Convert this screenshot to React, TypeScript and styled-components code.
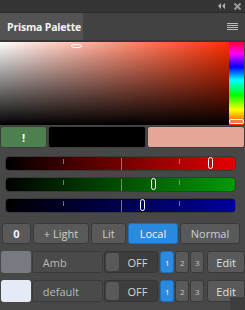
import { FC } from "react";
import styled, { createGlobalStyle } from "styled-components";

const Global = createGlobalStyle`
  html, body {
    margin: 0;
    padding: 0;
    background: #474747;
  }
  body {
    font-family: "Open Sans", "Noto Sans", sans-serif;
  }
`;

const Panel = styled.div`
  width: 245px;
  height: 310px;
  background: #474747;
  position: relative;
  overflow: hidden;
`;

const TopBar = styled.div`
  height: 12px;
  background: #353535;
  border-bottom: 1px solid #2b2b2b;
  display: flex;
  align-items: center;
  justify-content: flex-end;
  gap: 9px;
  padding-right: 4px;
`;

const TabBar = styled.div`
  height: 27px;
  background: #424242;
  display: flex;
  align-items: stretch;
  justify-content: space-between;
  border-bottom: 2px solid #363636;
`;

const Tab = styled.div`
  width: 83px;
  background: #535353;
  color: #f2f2f2;
  font-size: 10.5px;
  font-weight: 700;
  white-space: nowrap;
  letter-spacing: -0.2px;
  display: flex;
  align-items: center;
  padding-left: 7px;
  box-sizing: border-box;
`;

const MenuIcon = styled.div`
  display: flex;
  align-items: center;
  padding-right: 7px;
`;

const PickerRow = styled.div`
  display: flex;
  height: 83px;
`;

const SVArea = styled.div`
  position: relative;
  width: 229px;
  background: linear-gradient(to top, #000 0%, rgba(0, 0, 0, 0) 100%),
    linear-gradient(to right, #ffffff 0%, #ff2d00 100%);
`;

const SVMarker = styled.div`
  position: absolute;
  left: 71px;
  top: 2px;
  width: 9px;
  height: 2px;
  border: 1.5px solid #fff;
  border-radius: 50%;
`;

const HueBar = styled.div`
  position: relative;
  width: 15px;
  background: linear-gradient(
    to bottom,
    #ff0030 0%,
    #ff00ff 14%,
    #0000ff 30%,
    #00ffff 46%,
    #00ff00 64%,
    #ffff00 82%,
    #ff2a00 100%
  );
`;

const HueMarker = styled.div`
  position: absolute;
  left: 0;
  right: 0;
  bottom: 1px;
  height: 3px;
  background: #f07a5a;
  border: 1px solid #fff;
  border-radius: 2px;
`;

const SwatchRow = styled.div`
  display: flex;
  height: 22px;
  gap: 1px;
  margin-top: 1px;
`;

const Swatch = styled.div<{ $bg: string; $w: number }>`
  width: ${(p) => p.$w}px;
  background: ${(p) => p.$bg};
  border-radius: 3px;
  border: 1px solid #3c3c3c;
  box-sizing: border-box;
  display: flex;
  align-items: center;
  justify-content: center;
  color: #fff;
  font-size: 11px;
  font-weight: 700;
`;

const Sliders = styled.div`
  display: flex;
  flex-direction: column;
  gap: 6px;
  padding: 8px 9px 0 5px;
`;

const Slider = styled.div<{ $color: string }>`
  position: relative;
  height: 15px;
  border-radius: 4px;
  border: 1px solid #383838;
  box-sizing: border-box;
  background: linear-gradient(to right, #000 0%, ${(p) => p.$color} 100%);
`;

const Tick = styled.div<{ $full?: boolean }>`
  position: absolute;
  top: ${(p) => (p.$full ? 1 : 2)}px;
  width: 1px;
  height: ${(p) => (p.$full ? 12 : 5)}px;
  background: rgba(200, 200, 200, 0.55);
`;

const Thumb = styled.div`
  position: absolute;
  top: 0px;
  width: 3px;
  height: 10px;
  border: 1.5px solid #fff;
  border-radius: 3px;
`;

const ButtonRow = styled.div`
  display: flex;
  gap: 2px;
  padding: 10px 0 0 2px;
`;

const Btn = styled.div<{ $w: number; $active?: boolean; $bright?: boolean }>`
  width: ${(p) => p.$w}px;
  height: 21px;
  box-sizing: border-box;
  border-radius: 3px;
  border: 1px solid ${(p) => (p.$active ? "#1f6fb8" : "#3a3a3a")};
  background: ${(p) => (p.$active ? "#2a8ae0" : "#595959")};
  color: ${(p) => (p.$active || p.$bright ? "#f4f4f4" : "#cfcfcf")};
  font-size: 11px;
  font-weight: ${(p) => (p.$bright ? 700 : 400)};
  display: flex;
  align-items: center;
  justify-content: center;
`;

const Rows = styled.div`
  display: flex;
  flex-direction: column;
  gap: 7px;
  padding: 7px 0 0 1px;
`;

const LightRow = styled.div`
  display: flex;
  align-items: stretch;
  height: 22px;
`;

const ColorBox = styled.div<{ $bg: string }>`
  width: 30px;
  background: ${(p) => p.$bg};
  border-radius: 3px;
  margin-right: 1px;
`;

const NameField = styled.div`
  width: 71px;
  box-sizing: border-box;
  background: #4a4a4a;
  border: 1px solid #3a3a3a;
  border-radius: 3px;
  color: #b9b9b9;
  font-size: 11px;
  display: flex;
  align-items: center;
  padding-left: 10px;
  margin-right: 1px;
`;

const Toggle = styled.div`
  width: 55px;
  box-sizing: border-box;
  background: #3d3d3d;
  border: 1px solid #353535;
  border-radius: 3px;
  display: flex;
  align-items: stretch;
  padding: 1px;
  margin-right: 2px;
`;

const Knob = styled.div`
  width: 13px;
  background: #595959;
  border-radius: 3px;
`;

const ToggleText = styled.div`
  flex: 1;
  display: flex;
  align-items: center;
  justify-content: center;
  color: #d6d6d6;
  font-size: 11px;
`;

const NumBtn = styled.div<{ $active?: boolean }>`
  width: 14px;
  box-sizing: border-box;
  margin-right: 1px;
  border-radius: 3px;
  border: 1px solid ${(p) => (p.$active ? "#1f6fb8" : "#3a3a3a")};
  background: ${(p) => (p.$active ? "#2a8ae0" : "#595959")};
  color: ${(p) => (p.$active ? "#fff" : "#c6c6c6")};
  font-size: 8px;
  display: flex;
  align-items: center;
  justify-content: center;
`;

const EditBtn = styled.div`
  width: 38px;
  margin-left: 2px;
  box-sizing: border-box;
  border-radius: 3px;
  border: 1px solid #3a3a3a;
  background: #595959;
  color: #e0e0e0;
  font-size: 11px;
  display: flex;
  align-items: center;
  justify-content: center;
`;

const Grip = styled.div`
  position: absolute;
  right: 0;
  bottom: 0;
  width: 15px;
  height: 13px;
  background: #3e3e3e;
`;

const sliders = [
  { color: "#e60000", thumb: 202 },
  { color: "#009c00", thumb: 145 },
  { color: "#00009c", thumb: 134 },
];

const lights = [
  { name: "Amb", color: "#777a80" },
  { name: "default", color: "#e6e9f6" },
];

const App: FC = () => {
  return (
    <Panel>
      <Global />
      <TopBar>
        <svg width="8" height="6" viewBox="0 0 8 6">
          <path d="M4 0 L1 3 L4 6 Z M8 0 L5 3 L8 6 Z" fill="#b0b0b0" />
        </svg>
        <svg width="7" height="7" viewBox="0 0 7 7">
          <path d="M0.5 0.5 L6.5 6.5 M6.5 0.5 L0.5 6.5" stroke="#9a9a9a" strokeWidth="2" />
        </svg>
      </TopBar>
      <TabBar>
        <Tab>Prisma Palette</Tab>
        <MenuIcon>
          <svg width="11" height="8" viewBox="0 0 11 8">
            <path d="M0 0.5 H11 M0 2.5 H11 M0 4.5 H11 M0 6.5 H11" stroke="#bdbdbd" strokeWidth="1" />
          </svg>
        </MenuIcon>
      </TabBar>
      <PickerRow>
        <SVArea>
          <SVMarker />
        </SVArea>
        <HueBar>
          <HueMarker />
        </HueBar>
      </PickerRow>
      <SwatchRow>
        <Swatch $bg="#4e7f4e" $w={47}>!</Swatch>
        <Swatch $bg="#000" $w={98} />
        <Swatch $bg="#e5a698" $w={98} />
      </SwatchRow>
      <Sliders>
        {sliders.map((s) => (
          <Slider key={s.color} $color={s.color}>
            <Tick style={{ left: 57 }} />
            <Tick $full style={{ left: 115 }} />
            <Tick style={{ left: 173 }} />
            <Thumb style={{ left: s.thumb }} />
          </Slider>
        ))}
      </Sliders>
      <ButtonRow>
        <Btn $w={29} $bright>0</Btn>
        <Btn $w={56}>+ Light</Btn>
        <Btn $w={35}>Lit</Btn>
        <Btn $w={50} $active>Local</Btn>
        <Btn $w={60}>Normal</Btn>
      </ButtonRow>
      <Rows>
        {lights.map((l) => (
          <LightRow key={l.name}>
            <ColorBox $bg={l.color} />
            <NameField>{l.name}</NameField>
            <Toggle>
              <Knob />
              <ToggleText>OFF</ToggleText>
            </Toggle>
            <NumBtn $active>1</NumBtn>
            <NumBtn>2</NumBtn>
            <NumBtn>3</NumBtn>
            <EditBtn>Edit</EditBtn>
          </LightRow>
        ))}
      </Rows>
      <Grip />
    </Panel>
  );
};

export default App;
